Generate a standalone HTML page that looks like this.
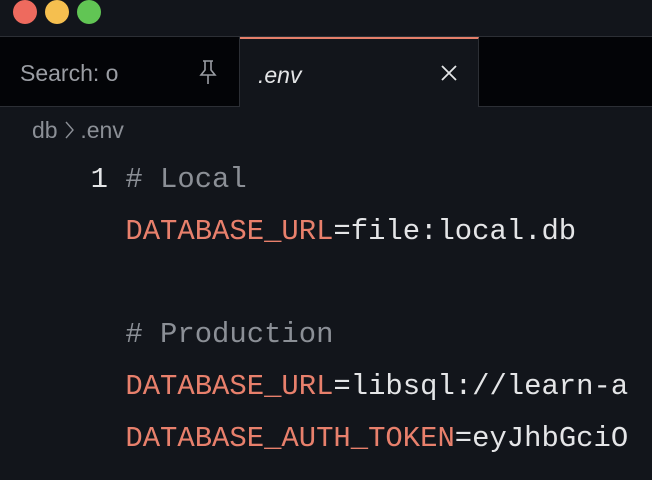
<!DOCTYPE html>
<html><head><style>
body{margin:0;width:652px;height:480px;overflow:hidden;background:#12151b;font-family:"Liberation Sans",sans-serif;position:relative}
.tb{position:absolute;left:0;top:0;width:652px;height:36px;background:#12151b;border-bottom:1px solid #2c2f35}
.dot{position:absolute;top:0px;width:24px;height:24px;border-radius:50%}
.tabs{position:absolute;left:0;top:37px;width:652px;height:69px;background:#030407;border-bottom:1px solid #2c2f35}
.t1{position:absolute;left:0;top:0;width:239px;height:69px;border-right:1px solid #2c2f35;color:#9a9da3;font-size:23px}
.t2{position:absolute;left:240px;top:0;width:239px;height:70px;background:#12151b;border-top:2px solid #e57f6a;border-right:1px solid #2c2f35;box-sizing:border-box;color:#e4e5e7;font-size:23px}
.crumb{position:absolute;left:32px;top:117px;color:#8b8f96;font-size:23px}
.code{position:absolute;left:4px;top:154px;font-family:"Liberation Mono",monospace;font-size:28.9px;line-height:51.8px;white-space:pre;color:#e4e5e7}
.c{color:#8b8f96}.k{color:#e8806c}.ln{color:#e4e5e7}
</style></head><body>
<div class="tb">
<div class="dot" style="left:13px;background:#ee6a5e"></div>
<div class="dot" style="left:45px;background:#f5bf4f"></div>
<div class="dot" style="left:77px;background:#61c554"></div>
</div>
<div class="tabs">
<div class="t1"><span style="position:absolute;left:20px;top:23px">Search: o</span>
<svg style="position:absolute;left:198px;top:23px" width="20" height="26" viewBox="0 0 20 26" fill="none" stroke="#9a9da3" stroke-width="1.6"><path d="M5 1h10M7 1v9l-4 5h14l-4-5V1M10 15v9"/></svg></div>
<div class="t2"><span style="position:absolute;left:18px;top:23px;font-style:italic">.env</span>
<svg style="position:absolute;left:201px;top:26px" width="16" height="16" viewBox="0 0 16 16" stroke="#e4e5e7" stroke-width="1.8"><path d="M1 1L15 15M15 1L1 15"/></svg></div>
</div>
<div class="crumb">db <svg width="10" height="18" viewBox="0 0 10 18" fill="none" stroke="#8b8f96" stroke-width="1.4" style="vertical-align:-1px"><path d="M2 1l7 8-7 8"/></svg> .env</div>
<div class="code"><span class="ln">     1 </span><span class="c"># Local</span>
       <span class="k">DATABASE_URL</span>=file:local.db

       <span class="c"># Production</span>
       <span class="k">DATABASE_URL</span>=libsql://learn-a
       <span class="k">DATABASE_AUTH_TOKEN</span>=eyJhbGciO</div>
</body></html>
